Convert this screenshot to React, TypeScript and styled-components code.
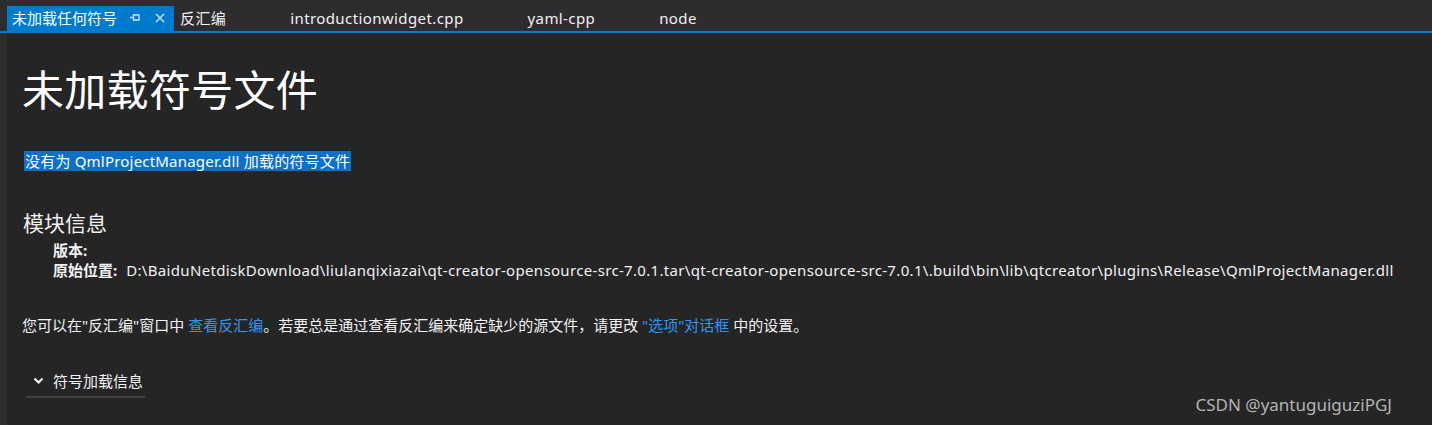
import React from "react";
import styled, { createGlobalStyle } from "styled-components";

const FONT = `"Noto Sans", "Noto Sans CJK SC", sans-serif`;

const Global = createGlobalStyle`
  html, body { margin: 0; padding: 0; background: #252526; }
  body { font-family: ${FONT}; }
  #root { height: 425px; }
`;

const Window = styled.div`
  width: 1432px;
  height: 425px;
  display: flex;
  flex-direction: column;
  background: #2d2d30;
  overflow: hidden;
  position: relative;
`;

const TabBar = styled.div`
  height: 31px;
  display: flex;
  align-items: flex-end;
  padding-left: 7px;
  border-bottom: 2px solid #007acc;
  background: #2d2d30;
`;

const Tab = styled.div<{ $active?: boolean }>`
  height: 25px;
  display: flex;
  align-items: center;
  box-sizing: border-box;
  padding: ${(p) => (p.$active ? "0 9px 2px 5px" : "0 58px 2px 6px")};
  background: ${(p) => (p.$active ? "#007acc" : "transparent")};
  color: ${(p) => (p.$active ? "#ffffff" : "#f1f1f1")};
  font-size: 15px;
  letter-spacing: ${(p) => (p.$active ? "0" : "0.4px")};
  white-space: nowrap;
`;

const TabIcon = styled.span<{ $ml: number }>`
  display: inline-flex;
  margin-left: ${(p) => p.$ml}px;
  color: #d0e6f5;
`;

const Body = styled.div`
  flex: 1;
  display: flex;
`;

const Gutter = styled.div`
  width: 7px;
  background: #2d2d30;
`;

const Content = styled.div`
  flex: 1;
  background: #252526;
  padding: 28px 0 0 15px;
  color: #f1f1f1;
`;

const Title = styled.h1`
  margin: 0;
  font-weight: 400;
  font-size: 42px;
  line-height: 58px;
  color: #ffffff;
  letter-spacing: 0.3px;
`;

const Selected = styled.div`
  margin: 32px 0 0 2px;
  display: inline-block;
  background: #0a70c8;
  color: #ffffff;
  font-size: 15px;
  line-height: 20px;
  letter-spacing: 0.2px;
  padding: 0 1px;
`;

const SubHead = styled.h2`
  margin: 37px 0 0 1px;
  font-weight: 400;
  font-size: 21px;
  line-height: 28px;
  color: #f1f1f1;
`;

const InfoList = styled.div`
  margin: 3px 0 0 31px;
  display: flex;
  flex-direction: column;
  font-size: 15px;
  line-height: 20px;
`;

const InfoRow = styled.div`
  white-space: nowrap;
`;

const Label = styled.span`
  font-weight: 700;
  margin-right: 9px;
`;

const Path = styled.span`
  letter-spacing: 0.33px;
`;

const Para = styled.p`
  margin: 35px 0 0 0;
  font-size: 15px;
  line-height: 20px;
  white-space: nowrap;
`;

const Link = styled.a`
  color: #2f96f0;
  text-decoration: none;
`;

const Expander = styled.div`
  margin: 36px 0 0 4px;
  width: 119px;
  display: flex;
  align-items: center;
  gap: 9px;
  padding: 0 0 5px 7px;
  box-sizing: border-box;
  border-bottom: 2px solid #3f3f46;
  font-size: 15px;
  line-height: 20px;
  color: #f1f1f1;
`;

const Watermark = styled.div`
  position: absolute;
  right: 40px;
  bottom: 9px;
  font-family: "Noto Sans", sans-serif;
  font-size: 17px;
  color: #b4b4b4;
`;

const PinIcon = () => (
  <svg width="10" height="9" viewBox="0 0 10 9">
    <path d="M0 4.5h3.5M3.5 1v7M3.5 2h5.5v5H3.5" fill="none" stroke="currentColor" strokeWidth="1.3" />
  </svg>
);

const CloseIcon = () => (
  <svg width="10" height="10" viewBox="0 0 10 10">
    <path d="M1 1l8 8M9 1L1 9" stroke="currentColor" strokeWidth="1.4" />
  </svg>
);

const Chevron = () => (
  <svg width="11" height="8" viewBox="0 0 11 8">
    <path d="M1.5 1.5l4 4 4-4" fill="none" stroke="#f1f1f1" strokeWidth="2.2" />
  </svg>
);

export default function App() {
  return (
    <Window>
      <Global />
      <TabBar>
        <Tab $active>
          未加载任何符号
          <TabIcon $ml={13}>
            <PinIcon />
          </TabIcon>
          <TabIcon $ml={15}>
            <CloseIcon />
          </TabIcon>
        </Tab>
        <Tab>反汇编</Tab>
        <Tab>introductionwidget.cpp</Tab>
        <Tab>yaml-cpp</Tab>
        <Tab>node</Tab>
      </TabBar>
      <Body>
        <Gutter />
        <Content>
          <Title>未加载符号文件</Title>
          <Selected>没有为 QmlProjectManager.dll 加载的符号文件</Selected>
          <SubHead>模块信息</SubHead>
          <InfoList>
            <InfoRow>
              <Label>版本:</Label>
            </InfoRow>
            <InfoRow>
              <Label>原始位置:</Label>
              <Path>
                D:\BaiduNetdiskDownload\liulanqixiazai\qt-creator-opensource-src-7.0.1.tar\qt-creator-opensource-src-7.0.1\.build\bin\lib\qtcreator\plugins\Release\QmlProjectManager.dll
              </Path>
            </InfoRow>
          </InfoList>
          <Para>
            您可以在"反汇编"窗口中 <Link>查看反汇编</Link>。若要总是通过查看反汇编来确定缺少的源文件，请更改{" "}
            <Link>"选项"对话框</Link> 中的设置。
          </Para>
          <Expander>
            <Chevron />
            符号加载信息
          </Expander>
        </Content>
      </Body>
      <Watermark>CSDN @yantuguiguziPGJ</Watermark>
    </Window>
  );
}
